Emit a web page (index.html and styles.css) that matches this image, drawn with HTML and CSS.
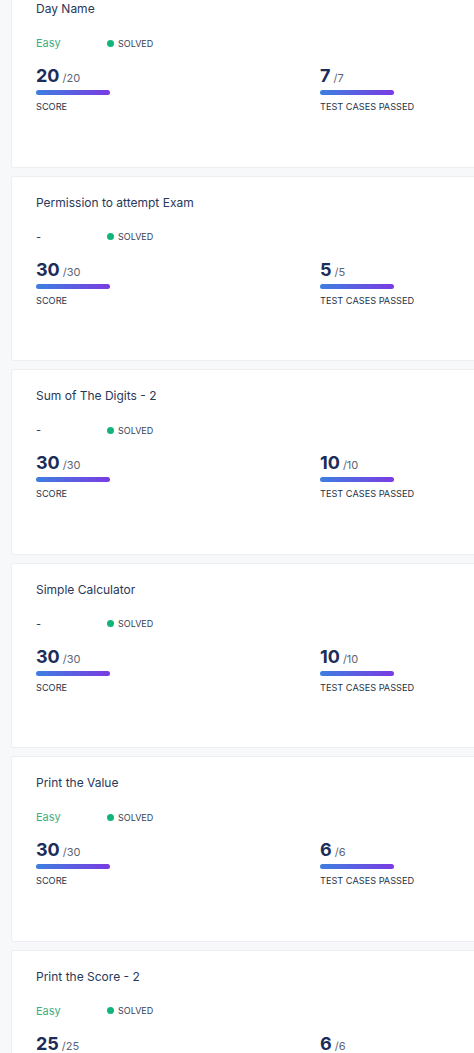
FILE: index.html
```
<!DOCTYPE html>
<html>
<head>
<meta charset="utf-8">
<link rel="stylesheet" href="styles.css">
</head>
<body>
<div class="list">
  <div class="card">
    <div class="title">Day Name</div>
    <div class="meta"><span class="diff easy">Easy</span><span class="status"><span class="dot"></span>SOLVED</span></div>
    <div class="stats">
      <div class="stat"><div class="num"><b>20</b><span>/20</span></div><div class="bar"></div><div class="label">SCORE</div></div>
      <div class="stat"><div class="num"><b>7</b><span>/7</span></div><div class="bar"></div><div class="label">TEST CASES PASSED</div></div>
    </div>
  </div>
  <div class="card">
    <div class="title">Permission to attempt Exam</div>
    <div class="meta"><span class="diff">-</span><span class="status"><span class="dot"></span>SOLVED</span></div>
    <div class="stats">
      <div class="stat"><div class="num"><b>30</b><span>/30</span></div><div class="bar"></div><div class="label">SCORE</div></div>
      <div class="stat"><div class="num"><b>5</b><span>/5</span></div><div class="bar"></div><div class="label">TEST CASES PASSED</div></div>
    </div>
  </div>
  <div class="card">
    <div class="title">Sum of The Digits - 2</div>
    <div class="meta"><span class="diff">-</span><span class="status"><span class="dot"></span>SOLVED</span></div>
    <div class="stats">
      <div class="stat"><div class="num"><b>30</b><span>/30</span></div><div class="bar"></div><div class="label">SCORE</div></div>
      <div class="stat"><div class="num"><b>10</b><span>/10</span></div><div class="bar"></div><div class="label">TEST CASES PASSED</div></div>
    </div>
  </div>
  <div class="card">
    <div class="title">Simple Calculator</div>
    <div class="meta"><span class="diff">-</span><span class="status"><span class="dot"></span>SOLVED</span></div>
    <div class="stats">
      <div class="stat"><div class="num"><b>30</b><span>/30</span></div><div class="bar"></div><div class="label">SCORE</div></div>
      <div class="stat"><div class="num"><b>10</b><span>/10</span></div><div class="bar"></div><div class="label">TEST CASES PASSED</div></div>
    </div>
  </div>
  <div class="card">
    <div class="title">Print the Value</div>
    <div class="meta"><span class="diff easy">Easy</span><span class="status"><span class="dot"></span>SOLVED</span></div>
    <div class="stats">
      <div class="stat"><div class="num"><b>30</b><span>/30</span></div><div class="bar"></div><div class="label">SCORE</div></div>
      <div class="stat"><div class="num"><b>6</b><span>/6</span></div><div class="bar"></div><div class="label">TEST CASES PASSED</div></div>
    </div>
  </div>
  <div class="card">
    <div class="title">Print the Score - 2</div>
    <div class="meta"><span class="diff easy">Easy</span><span class="status"><span class="dot"></span>SOLVED</span></div>
    <div class="stats">
      <div class="stat"><div class="num"><b>25</b><span>/25</span></div><div class="bar"></div><div class="label">SCORE</div></div>
      <div class="stat"><div class="num"><b>6</b><span>/6</span></div><div class="bar"></div><div class="label">TEST CASES PASSED</div></div>
    </div>
  </div>
</div>
</body>
</html>
```
FILE: styles.css
```
html, body {
  margin: 0;
  padding: 0;
  background: #f7f8fa;
  overflow: hidden;
  font-family: Inter, "Noto Sans", sans-serif;
}
.list {
  margin-top: -18px;
  padding-left: 11px;
  width: 620px;
  display: flex;
  flex-direction: column;
  gap: 8px;
}
.card {
  box-sizing: border-box;
  height: 185.5px;
  background: #fff;
  border: 1px solid #eceef2;
  border-radius: 3px;
  padding: 17px 0 0 24px;
}
.title {
  font-size: 12px;
  line-height: 18px;
  color: #29385a;
}
.meta {
  display: flex;
  align-items: center;
  margin-top: 17px;
  height: 16px;
}
.diff {
  width: 71px;
  flex: none;
  font-size: 11px;
  color: #2c3a55;
}
.diff.easy {
  color: #3fae7e;
}
.status {
  display: flex;
  align-items: center;
  font-size: 9px;
  font-weight: 400;
  color: #374256;
}
.dot {
  width: 7px;
  height: 7px;
  border-radius: 50%;
  background: #12b47a;
  margin-right: 4px;
}
.stats {
  display: flex;
  margin-top: 14px;
}
.stat {
  width: 284px;
  flex: none;
}
.num {
  display: flex;
  align-items: baseline;
  height: 22px;
  line-height: 22px;
}
.num b {
  font-size: 18px;
  font-weight: 700;
  color: #1c2d59;
}
.num span {
  font-size: 11px;
  color: #5b6475;
  margin-left: 3px;
}
.bar {
  width: 74px;
  height: 5px;
  border-radius: 3px;
  margin-top: 3px;
  background: linear-gradient(90deg, #3d7fe0, #7b3be3);
}
.label {
  margin-top: 5px;
  font-size: 9.2px;
  line-height: 14px;
  font-weight: 400;
  color: #26334a;
}
```
